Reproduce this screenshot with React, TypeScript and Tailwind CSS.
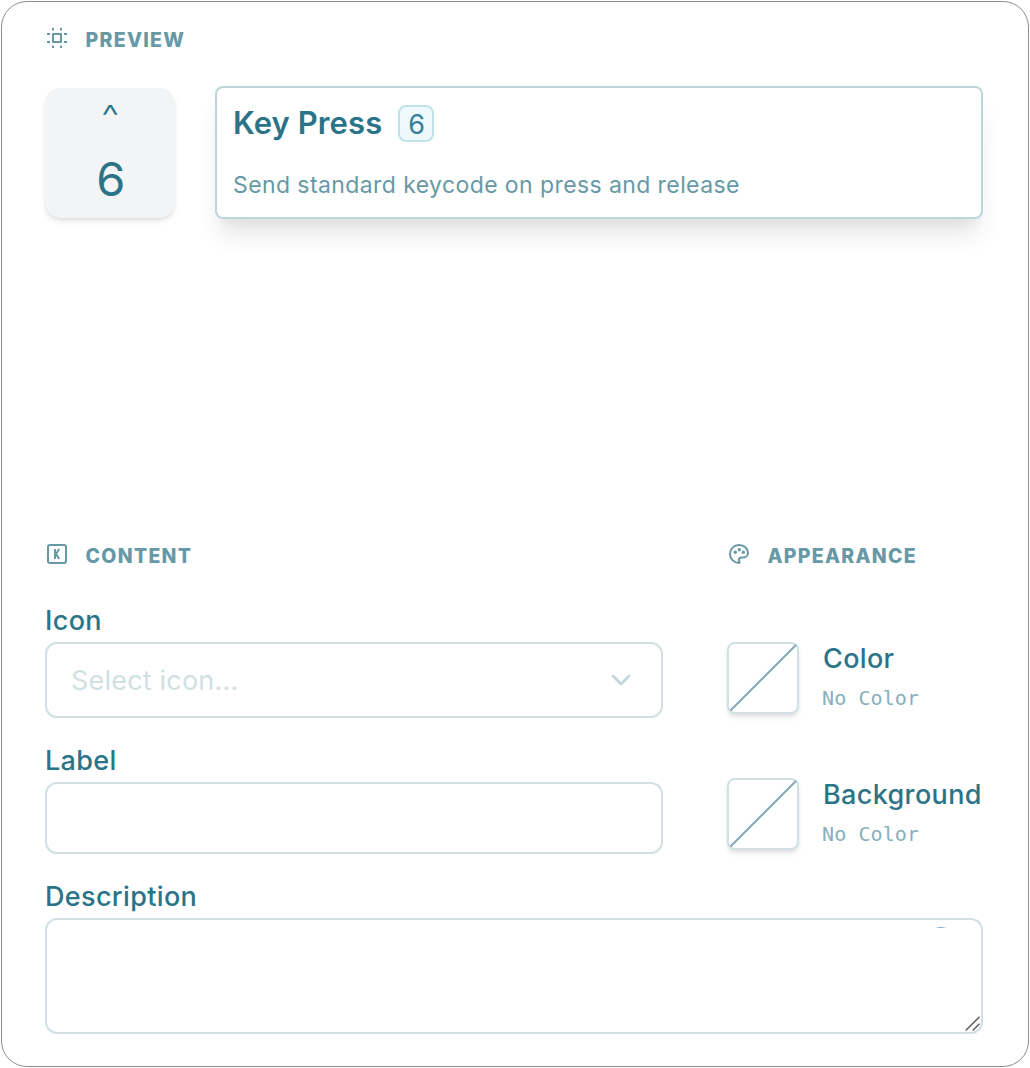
import { ChevronDown } from 'lucide-react';
import type { ReactNode } from 'react';

const PreviewIcon = () => (
  <svg viewBox="0 0 24 24" className="w-6 h-6" fill="none" stroke="currentColor" strokeWidth="2">
    <rect x="8" y="8" width="8" height="8" strokeLinejoin="round" />
    <path d="M8 2v2.5M16 2v2.5M8 19.5v2.5M16 19.5v2.5M2 8h3M2 16h3M19 8h3M19 16h3" />
  </svg>
);

const KeyIcon = () => (
  <svg viewBox="0 0 24 24" className="w-6 h-6" fill="none" stroke="currentColor" strokeWidth="2">
    <rect x="3" y="3" width="18" height="18" rx="2" />
    <path d="M10 7v10M14.2 7l-3.2 5 3.2 5" />
  </svg>
);

const PaletteIcon = () => (
  <svg viewBox="0 0 24 24" className="w-6 h-6" fill="none" stroke="currentColor" strokeWidth="2">
    <path d="M12 3c5 0 9 3.5 9 7.9 0 2.5-2 4.5-4.6 4.5h-1.9c-1.5 0-2.7 1.2-2.7 2.7 0 .7.3 1.3.7 1.8.1.1.2.3.2.4 0 .4-.3.7-.7.7a9 9 0 0 1 0-18z" />
    <g fill="currentColor" stroke="none">
      <circle cx="8.3" cy="10.3" r="1.7" />
      <circle cx="12.3" cy="7.7" r="1.7" />
      <circle cx="16.3" cy="10.3" r="1.7" />
    </g>
  </svg>
);

const SectionTitle = ({ icon, children }: { icon: ReactNode; children: ReactNode }) => (
  <h2 className="flex items-center gap-[16.5px] h-7 text-[#6699a5] text-[19.5px] leading-7 font-extrabold tracking-[1.3px]">
    {icon}
    <span className="pt-1">{children}</span>
  </h2>
);

const FieldLabel = ({ children }: { children: ReactNode }) => (
  <div className="h-9 pt-px text-[27px] leading-9 font-medium tracking-[0.35px] text-[#2b7488]">{children}</div>
);

const swatches = ['Color', 'Background'];

const Swatch = ({ label }: { label: string }) => (
  <div className="flex gap-6">
    <div className="w-[72px] h-[72px] shrink-0 rounded-lg border-2 border-[#d0e0e3] bg-white shadow-[0_4px_6px_-1px_rgba(0,0,0,0.1),0_2px_4px_-1px_rgba(0,0,0,0.06)]">
      <svg viewBox="0 0 68 68" className="w-full h-full" stroke="#84a9b6" strokeWidth="2">
        <path d="M1.5 66.5L67 1" />
      </svg>
    </div>
    <div>
      <div className="h-8 pt-px text-[27px] leading-8 font-medium tracking-[0.35px] text-[#2b7488]">{label}</div>
      <div className="-ml-px mt-2 text-xl leading-8 tracking-[0.1px] text-[#88afba] font-['DejaVu_Sans_Mono',monospace]">
        No Color
      </div>
    </div>
  </div>
);

export default function App() {
  return (
    <div className="w-[1030px] h-[1068px] p-px bg-white font-['Inter',sans-serif]">
      <div className="w-[1028px] h-[1066px] rounded-[26px] border border-[#8e8e8e] bg-white pl-[43px] pr-[45px] pt-[22px]">
        <SectionTitle icon={<PreviewIcon />}>PREVIEW</SectionTitle>

        {/* Key cap and behaviour summary */}
        <div className="mt-[34px] flex h-[133px] gap-10">
          <div className="mt-[2px] w-[130px] h-[130px] shrink-0 rounded-2xl bg-[#f2f4f6] shadow-[0_4px_6px_-1px_rgba(0,0,0,0.1),0_2px_4px_-1px_rgba(0,0,0,0.06)] flex flex-col items-center text-[#2b7488]">
            <div className="mt-[13px] pl-px text-[32px] leading-8 font-light scale-x-125">^</div>
            <div className="mt-[18px] text-[47px] leading-[56px] tracking-[-1.5px]">6</div>
          </div>
          <div className="grow h-[133px] rounded-lg border-2 border-[#bfd5dc] bg-white shadow-[0_20px_25px_-5px_rgba(0,0,0,0.1),0_10px_10px_-5px_rgba(0,0,0,0.04)] px-4 pt-[17px]">
            <div className="flex h-[37px] gap-4">
              <div className="text-[31px] leading-9 font-semibold tracking-[0.1px] text-[#2b7488]">Key Press</div>
              <div className="w-9 h-[37px] rounded-lg border-2 border-[#c0e3ea] bg-[#eff8fb] text-[27px] leading-[35px] tracking-[-0.5px] text-center text-[#338299]">
                6
              </div>
            </div>
            <p className="mt-[27px] text-[23px] leading-8 tracking-[0.41px] text-[#6699a5]">
              Send standard keycode on press and release
            </p>
          </div>
        </div>

        <div className="mt-[321px] flex justify-between">
          <div className="w-[618px]">
            <SectionTitle icon={<KeyIcon />}>CONTENT</SectionTitle>
            <div className="mt-[34px]">
              <FieldLabel>Icon</FieldLabel>
            </div>
            <div className="mt-1 h-[76px] rounded-xl border-2 border-[#d0e0e3] px-6 flex items-center justify-between text-[27px] tracking-[0.2px] text-[#d0e0e3]">
              <span className="pt-0.5">Select icon...</span>
              <ChevronDown className="w-8 h-8 text-[#c4d6de]" strokeWidth={2.2} />
            </div>
            <div className="mt-6">
              <FieldLabel>Label</FieldLabel>
            </div>
            <input className="mt-1 block w-full h-[72px] rounded-xl border-2 border-[#d0e0e3] px-6 text-[27px] outline-none" />
          </div>

          <div className="w-64">
            <SectionTitle icon={<PaletteIcon />}>APPEARANCE</SectionTitle>
            <div className="mt-[74px] flex flex-col gap-16">
              {swatches.map((label) => (
                <Swatch key={label} label={label} />
              ))}
            </div>
          </div>
        </div>

        <div className="mt-6">
          <FieldLabel>Description</FieldLabel>
        </div>
        <div className="relative mt-1 h-[116px] rounded-xl border-2 border-[#d0e0e3]">
          <div className="absolute right-[34px] top-[7px] w-3 h-px bg-linear-to-r from-transparent via-[#6fa9da] to-transparent" />
          {/* Resize grip */}
          <svg
            className="absolute right-0 bottom-0 w-4 h-4"
            viewBox="0 0 16 16"
            stroke="#5f5f5f"
            strokeWidth="1.6"
            strokeLinecap="round"
          >
            <path d="M1.2 14L14 1.2M8.2 14L14 8.2" />
          </svg>
        </div>
      </div>
    </div>
  );
}
